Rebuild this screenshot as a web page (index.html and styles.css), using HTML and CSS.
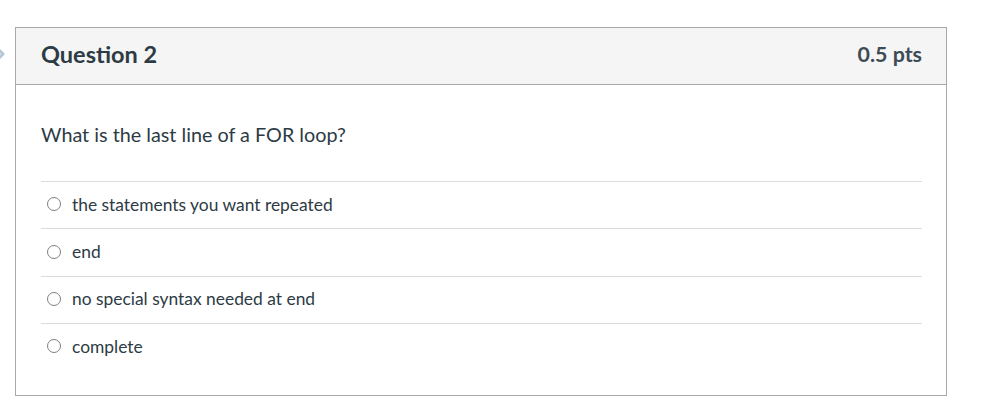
FILE: index.html
```html
<!DOCTYPE html>
<html>
<head>
<meta charset="utf-8">
<link rel="stylesheet" href="styles.css">
</head>
<body>
<svg class="nav-arrow" width="6" height="12" viewBox="0 0 6 12"><path d="M-2 1 L3 6 L-2 11" fill="none" stroke="#b3c5d6" stroke-width="3" stroke-linecap="round" stroke-linejoin="round"/></svg>
<div class="question">
  <div class="header">
    <span class="title">Question 2</span>
    <span class="points">0.5 pts</span>
  </div>
  <div class="body">
    <div class="text">What is the last line of a FOR loop?</div>
    <div class="answers">
      <label class="answer"><span class="radio"></span><span>the statements you want repeated</span></label>
      <label class="answer"><span class="radio"></span><span>end</span></label>
      <label class="answer"><span class="radio"></span><span>no special syntax needed at end</span></label>
      <label class="answer"><span class="radio"></span><span>complete</span></label>
    </div>
  </div>
</div>
</body>
</html>
```
FILE: styles.css
```css
html, body {
  margin: 0;
  background: #fff;
}
body {
  padding: 27px 0 0 15px;
  font-family: Lato, "Liberation Sans", sans-serif;
  color: #2d3b45;
  position: relative;
}
.nav-arrow {
  position: absolute;
  left: 0;
  top: 48px;
}
.question {
  width: 932px;
  box-sizing: border-box;
  border: 1px solid #a9a9a9;
}
.header {
  background: #f5f5f5;
  border-bottom: 1px solid #a9a9a9;
  display: flex;
  align-items: center;
  justify-content: space-between;
  padding: 0 24px 4px 25px;
  box-sizing: border-box;
  height: 57px;
}
.title {
  font-size: 23.5px;
  font-weight: 700;
}
.points {
  font-size: 21.4px;
  font-weight: 700;
  color: #3d4b55;
}
.body {
  padding: 35px 24px 24px 25px;
}
.text {
  font-size: 19.8px;
  line-height: 28px;
  margin-bottom: 33px;
}
.answer {
  display: flex;
  align-items: center;
  border-top: 1px solid #dcdcdc;
  box-sizing: border-box;
  height: 47.4px;
  padding-bottom: 2px;
  font-size: 17.4px;
  padding-left: 6px;
  gap: 11px;
}
.radio {
  width: 12px;
  height: 12px;
  border: 1px solid #808080;
  border-radius: 50%;
  flex: none;
}
```
